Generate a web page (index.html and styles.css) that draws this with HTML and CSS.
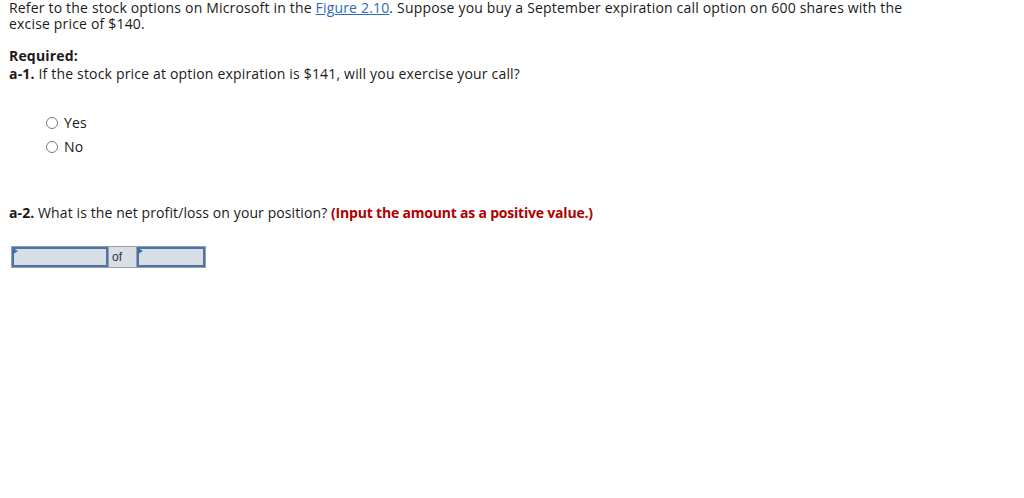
FILE: index.html
```html
<!DOCTYPE html>
<html>
<head>
<meta charset="utf-8">
<link rel="stylesheet" href="styles.css">
</head>
<body>
<div class="page">
  <p class="intro">Refer to the stock options on Microsoft in the <a class="link" href="#">Figure 2.10</a>. Suppose you buy a September expiration call option on 600 shares with the excise price of $140.</p>
  <div class="req">
    <div class="req-title">Required:</div>
    <div class="q"><b>a-1.</b> If the stock price at option expiration is $141, will you exercise your call?</div>
  </div>
  <div class="options">
    <label class="opt"><span class="radio"></span>Yes</label>
    <label class="opt"><span class="radio"></span>No</label>
  </div>
  <div class="q q2"><b>a-2.</b> What is the net profit/loss on your position? <span class="hint">(Input the amount as a positive value.)</span></div>
  <div class="answer">
    <div class="field f1"></div>
    <div class="of">of</div>
    <div class="field f2"></div>
  </div>
</div>
</body>
</html>
```

FILE: styles.css
```css
html, body {
  margin: 0;
  padding: 0;
  background: #fff;
}
body {
  font-family: "Open Sans", "Liberation Sans", sans-serif;
  font-size: 14px;
  letter-spacing: 0.18px;
  color: #1a1a1a;
}
.page {
  padding: 0 0 0 9px;
  width: 910px;
}
.intro {
  margin: 0;
  line-height: 16px;
}
.link {
  color: #2b6cb8;
  text-decoration: underline;
}
.req {
  margin-top: 15px;
  line-height: 18px;
}
.req-title {
  font-weight: bold;
}
.q b {
  font-weight: bold;
}
.options {
  display: flex;
  flex-direction: column;
  gap: 6px;
  padding: 31px 0 0 37px;
}
.opt {
  display: flex;
  align-items: center;
  gap: 6px;
  line-height: 18px;
}
.radio {
  width: 12px;
  height: 12px;
  border: 1px solid #777;
  border-radius: 50%;
  box-sizing: border-box;
  display: inline-block;
}
.q2 {
  margin-top: 48px;
  line-height: 18px;
  letter-spacing: 0.1px;
}
.hint {
  color: #b00000;
  font-weight: bold;
  letter-spacing: -0.2px;
}
.answer {
  display: flex;
  margin-top: 24px;
  margin-left: 2px;
  width: 195px;
  height: 22px;
  border: 1px solid #9aa0a8;
  background: #d9dde6;
  box-sizing: border-box;
}
.field {
  position: relative;
  border: 2px solid #4a73a8;
  box-sizing: border-box;
  height: 20px;
  background: #d9dde6;
}
.field::before {
  content: "";
  position: absolute;
  left: -1px;
  top: -1px;
  border-left: 5px solid #3a6fb5;
  border-top: 3px solid transparent;
  border-bottom: 3px solid transparent;
}
.f1 { width: 96px; }
.f2 { width: 68px; }
.of {
  width: 29px;
  font-family: "Liberation Sans", sans-serif;
  font-size: 12px;
  letter-spacing: 0;
  color: #333;
  padding-left: 3px;
  box-sizing: border-box;
  line-height: 20px;
  border-left: 1px solid #9aa0a8;
  border-right: 1px solid #9aa0a8;
}
```
